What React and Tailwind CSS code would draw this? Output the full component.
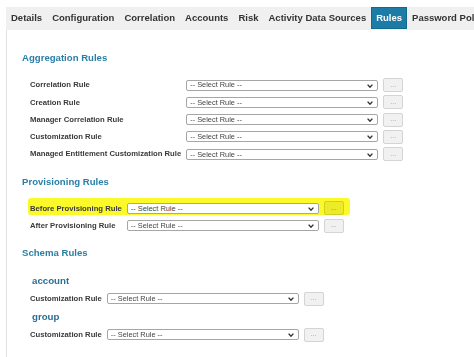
import React from 'react';

const tabs = ['Details', 'Configuration', 'Correlation', 'Accounts', 'Risk', 'Activity Data Sources', 'Rules', 'Password Policies'];

function RuleSelect() {
  return (
    <div className="flex items-center gap-[5px]">
      <div className="relative flex h-[11px] w-[192px] items-center rounded-[2px] border border-[#a6a6a6] bg-white pl-[3px] text-[7.4px] leading-none text-[#444]">
        -- Select Rule --
        <svg className="absolute right-[4px] top-[3px]" width="6" height="4" viewBox="0 0 6 4">
          <polyline points="0.6,0.6 3,3.2 5.4,0.6" fill="none" stroke="#333" strokeWidth="1.4" />
        </svg>
      </div>
      <button className="flex h-[14px] w-[20px] items-center justify-center rounded-[2px] border border-[#d4d4d4] bg-[#f1f1f1] pb-[2px] text-[7px] leading-none text-[#9a9a9a]">
        ...
      </button>
    </div>
  );
}

function RuleRows({ rows, highlight }) {
  return (
    <div className="grid w-max grid-cols-[auto_auto] gap-x-[5px] pl-[8px]">
      {rows.map((label) => (
        <React.Fragment key={label}>
          <div className="relative flex h-[17.3px] items-center text-[7.7px] font-bold text-[#3a3a3a]">
            {highlight === label && (
              <span className="pointer-events-none absolute left-[-2px] top-[-1.5px] h-[17px] w-[322px] rounded-[3px] bg-[#fbf92a] mix-blend-multiply" />
            )}
            <span className="relative">{label}</span>
          </div>
          <div className="flex h-[17.3px] items-center">
            <RuleSelect />
          </div>
        </React.Fragment>
      ))}
    </div>
  );
}

export default function App() {
  return (
    <div className="h-[357px] w-[474px] overflow-hidden bg-white pl-[6px] pt-[7px] font-['Liberation_Sans',Arial,sans-serif]">
      <div className="flex h-[23px] items-center overflow-hidden whitespace-nowrap bg-[#f0f0f0]">
        {tabs.map((t) => (
          <div
            key={t}
            className={
              t === 'Rules'
                ? 'flex h-[22px] shrink-0 items-center self-start border border-[#11698f] bg-[#1c7ca6] px-[4px] text-[9.5px] font-bold text-white'
                : 'flex h-full shrink-0 items-center px-[5px] text-[9.5px] font-bold text-[#333]'
            }
          >
            {t}
          </div>
        ))}
      </div>

      <div className="h-full border-l border-[#e2e2e2] pl-[15px] pt-[22px]">
        <h2 className="text-[9.6px] font-bold leading-[12px] text-[#2a7fa6]">Aggregation Rules</h2>
        <div className="mt-[12.4px]">
          <RuleRows
            rows={[
              'Correlation Rule',
              'Creation Rule',
              'Manager Correlation Rule',
              'Customization Rule',
              'Managed Entitlement Customization Rule',
            ]}
          />
        </div>

        <h2 className="mt-[13.4px] text-[9.6px] font-bold leading-[12px] text-[#2a7fa6]">Provisioning Rules</h2>
        <div className="mt-[11.4px]">
          <RuleRows rows={['Before Provisioning Rule', 'After Provisioning Rule']} highlight="Before Provisioning Rule" />
        </div>

        <h2 className="mt-[12.4px] text-[9.6px] font-bold leading-[12px] text-[#2a7fa6]">Schema Rules</h2>
        <h3 className="mt-[16px] pl-[10px] text-[9.7px] font-bold leading-[12px] text-[#2a6f96]">account</h3>
        <div className="mt-[3.4px]">
          <RuleRows rows={['Customization Rule']} />
        </div>
        <h3 className="mt-[3.4px] pl-[10px] text-[9.7px] font-bold leading-[12px] text-[#2a6f96]">group</h3>
        <div className="mt-[3.4px]">
          <RuleRows rows={['Customization Rule ']} />
        </div>
      </div>
    </div>
  );
}
